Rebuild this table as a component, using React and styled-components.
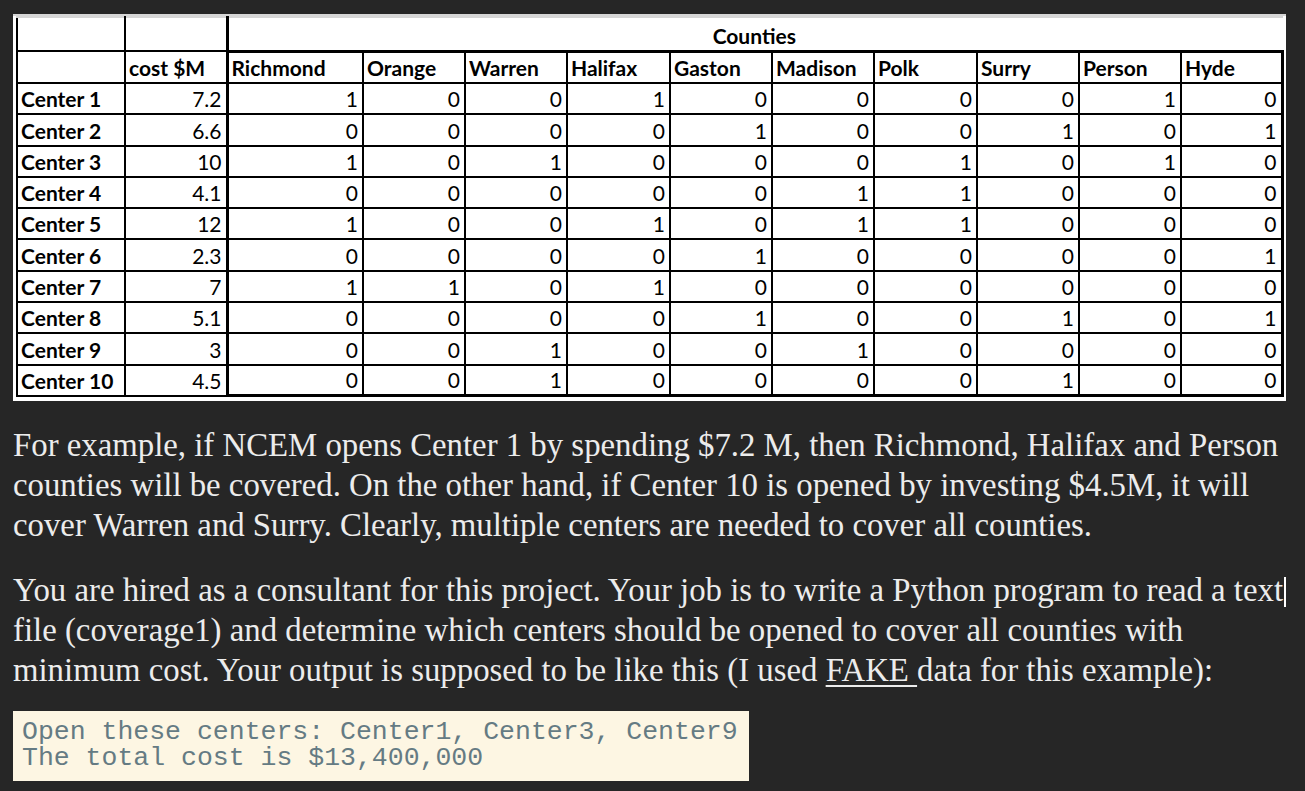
import React from "react";
import styled, { createGlobalStyle } from "styled-components";

const Global = createGlobalStyle`
  html, body { margin: 0; padding: 0; background: #262626; }
  body { font-family: "Liberation Serif", "Times New Roman", serif; }
`;

const Page = styled.div`
  padding: 14px 0 10px 13px;
  width: 1292px;
  box-sizing: border-box;
`;

const Sheet = styled.div`
  background: #ffffff;
  width: 1273px;
  box-sizing: border-box;
  padding: 0 0 4px 3px;
  border-top: 2px solid #d6d6d6;
`;

const Grid = styled.table`
  border-collapse: collapse;
  table-layout: fixed;
  font-family: Lato, "Open Sans", sans-serif;
  font-size: 21px;
  color: #000;
`;

const Row = styled.tr`
  height: ${(p) => p.$h}px;
`;

const Cell = styled.td`
  padding: 0 4px 1px 3px;
  vertical-align: bottom;
  line-height: 26px;
  white-space: nowrap;
  overflow: hidden;
  text-align: ${(p) => (p.$num ? "right" : p.$center ? "center" : "left")};
  font-weight: ${(p) => (p.$bold ? 700 : 400)};
  border-left: ${(p) => p.$l || 2}px solid ${(p) => (p.$l === 0 ? "transparent" : "#000")};
  border-right: ${(p) => p.$r || 2}px solid ${(p) => (p.$r === 0 ? "transparent" : "#000")};
  border-top: ${(p) => p.$t || 2}px solid ${(p) => (p.$t === 0 ? "#d6d6d6" : "#000")};
  border-bottom: ${(p) => p.$b || 2}px solid #000;
`;

const Text = styled.div`
  color: #ececec;
  font-size: 32.8px;
  line-height: 40px;
  margin-top: 24px;
  white-space: nowrap;
`;

const Para = styled.p`
  margin: 0 0 25px 0;
`;

const Under = styled.span`
  text-decoration: underline;
  text-decoration-thickness: 2px;
  text-underline-offset: 4px;
`;

const Caret = styled.span`
  display: inline-block;
  width: 0;
  height: 30px;
  border-left: 2px solid #ffffff;
  vertical-align: -6px;
  margin-left: 1px;
`;

const Code = styled.pre`
  margin: -4px 0 0 0;
  width: 736px;
  box-sizing: border-box;
  background: #fdf6e3;
  color: #657b83;
  font-family: "Liberation Mono", "DejaVu Sans Mono", monospace;
  font-size: 26.5px;
  line-height: 26px;
  padding: 8px 9px 10px 9px;
`;

const counties = ["Richmond", "Orange", "Warren", "Halifax", "Gaston", "Madison", "Polk", "Surry", "Person", "Hyde"];
const widths = [108, 102, 136, 102, 102, 103, 102, 102, 103, 102, 102, 101];

const rows = [
  ["Center 1", "7.2", [1, 0, 0, 1, 0, 0, 0, 0, 1, 0]],
  ["Center 2", "6.6", [0, 0, 0, 0, 1, 0, 0, 1, 0, 1]],
  ["Center 3", "10", [1, 0, 1, 0, 0, 0, 1, 0, 1, 0]],
  ["Center 4", "4.1", [0, 0, 0, 0, 0, 1, 1, 0, 0, 0]],
  ["Center 5", "12", [1, 0, 0, 1, 0, 1, 1, 0, 0, 0]],
  ["Center 6", "2.3", [0, 0, 0, 0, 1, 0, 0, 0, 0, 1]],
  ["Center 7", "7", [1, 1, 0, 1, 0, 0, 0, 0, 0, 0]],
  ["Center 8", "5.1", [0, 0, 0, 0, 1, 0, 0, 1, 0, 1]],
  ["Center 9", "3", [0, 0, 1, 0, 0, 1, 0, 0, 0, 0]],
  ["Center 10", "4.5", [0, 0, 1, 0, 0, 0, 0, 1, 0, 0]],
];

export default function App() {
  return (
    <>
      <Global />
      <Page>
        <Sheet>
          <Grid>
            <colgroup>
              {widths.map((w, i) => (
                <col key={i} style={{ width: w }} />
              ))}
            </colgroup>
            <tbody>
              <Row $h={34}>
                <Cell $t={0} />
                <Cell $t={0} />
                <Cell colSpan={10} $t={0} $r={0} $l={3} $b={3} $bold $center>
                  Counties
                </Cell>
              </Row>
              <Row $h={32}>
                <Cell />
                <Cell $bold $r={3}>cost $M</Cell>
                {counties.map((c, i) => (
                  <Cell key={c} $bold $t={3} $l={i === 0 ? 3 : 2} $r={i === 9 ? 3 : 2}>
                    {c}
                  </Cell>
                ))}
              </Row>
              {rows.map(([name, cost, vals], ri) => (
                <Row key={name} $h={31.3}>
                  <Cell $bold>{name}</Cell>
                  <Cell $num $r={3}>{cost}</Cell>
                  {vals.map((v, i) => (
                    <Cell
                      key={i}
                      $num
                      $l={i === 0 ? 3 : 2}
                      $r={i === 9 ? 3 : 2}
                      $b={ri === rows.length - 1 ? 3 : 2}
                    >
                      {v}
                    </Cell>
                  ))}
                </Row>
              ))}
            </tbody>
          </Grid>
        </Sheet>
        <Text>
          <Para>
            For example, if NCEM opens Center 1 by spending $7.2 M, then Richmond, Halifax and Person
            <br />
            counties will be covered. On the other hand, if Center 10 is opened by investing $4.5M, it will
            <br />
            cover Warren and Surry. Clearly, multiple centers are needed to cover all counties.
          </Para>
          <Para>
            You are hired as a consultant for this project. Your job is to write a Python program to read a text
            <Caret />
            <br />
            file (coverage1) and determine which centers should be opened to cover all counties with
            <br />
            minimum cost. Your output is supposed to be like this (I used <Under>FAKE </Under>data for this example):
          </Para>
        </Text>
        <Code>
          {"Open these centers: Center1, Center3, Center9\nThe total cost is $13,400,000"}
        </Code>
      </Page>
    </>
  );
}
